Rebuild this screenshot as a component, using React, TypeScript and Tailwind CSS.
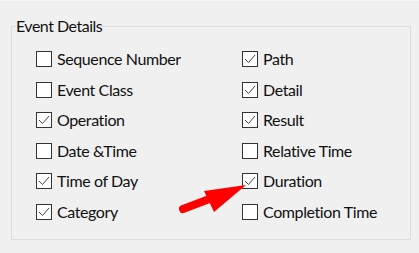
import React from "react";

const left: [string, boolean][] = [
  ["Sequence Number", false],
  ["Event Class", false],
  ["Operation", true],
  ["Date &Time", false],
  ["Time of Day", true],
  ["Category", true],
];
const right: [string, boolean][] = [
  ["Path", true],
  ["Detail", true],
  ["Result", true],
  ["Relative Time", false],
  ["Duration", true],
  ["Completion Time", false],
];

function Box({ checked }: { checked: boolean }) {
  return (
    <span className="w-[16px] h-[16px] border border-[#333333] bg-white flex items-center justify-center shrink-0">
      {checked && (
        <svg width="14" height="14" viewBox="0 0 14 14">
          <path d="M2 7 L5.5 10.5 L12 3" fill="none" stroke="#444" strokeWidth="1" />
        </svg>
      )}
    </span>
  );
}

function Item({ label, checked }: { label: string; checked: boolean }) {
  return (
    <div className="flex items-center gap-[5px] h-[16px]">
      <Box checked={checked} />
      <span className="text-[16px] leading-none tracking-[-0.4px] text-[#111] whitespace-pre">{label}</span>
    </div>
  );
}

export default function App() {
  return (
    <div
      className="relative w-[419px] h-[253px] bg-[#f0f0f0] border-t border-[#f7f7f7] pt-[15px] overflow-hidden"
      style={{ fontFamily: 'Lato, "Noto Sans", sans-serif' }}
    >
      <fieldset className="ml-[11px] w-[400px] h-[224px] border border-[#dcdcdc]">
        <legend className="text-[16px] leading-[20px] tracking-[-0.5px] text-[#111] ml-[4px] px-0">Event Details</legend>
        <div className="grid grid-cols-[206px_1fr] mt-[15px] pl-[24px]">
          <div className="flex flex-col gap-[14.6px]">
            {left.map(([l, c]) => (
              <Item key={l} label={l} checked={c} />
            ))}
          </div>
          <div className="flex flex-col gap-[14.6px]">
            {right.map(([l, c]) => (
              <Item key={l} label={l} checked={c} />
            ))}
          </div>
        </div>
      </fieldset>
      <svg className="absolute left-0 top-0 pointer-events-none" width="419" height="253" viewBox="0 0 419 253">
        <line x1="183" y1="208" x2="212" y2="197" stroke="#ff0000" strokeWidth="8" strokeLinecap="round" />
        <polygon points="246,184 204,190 214,211" fill="#ff0000" />
      </svg>
    </div>
  );
}
